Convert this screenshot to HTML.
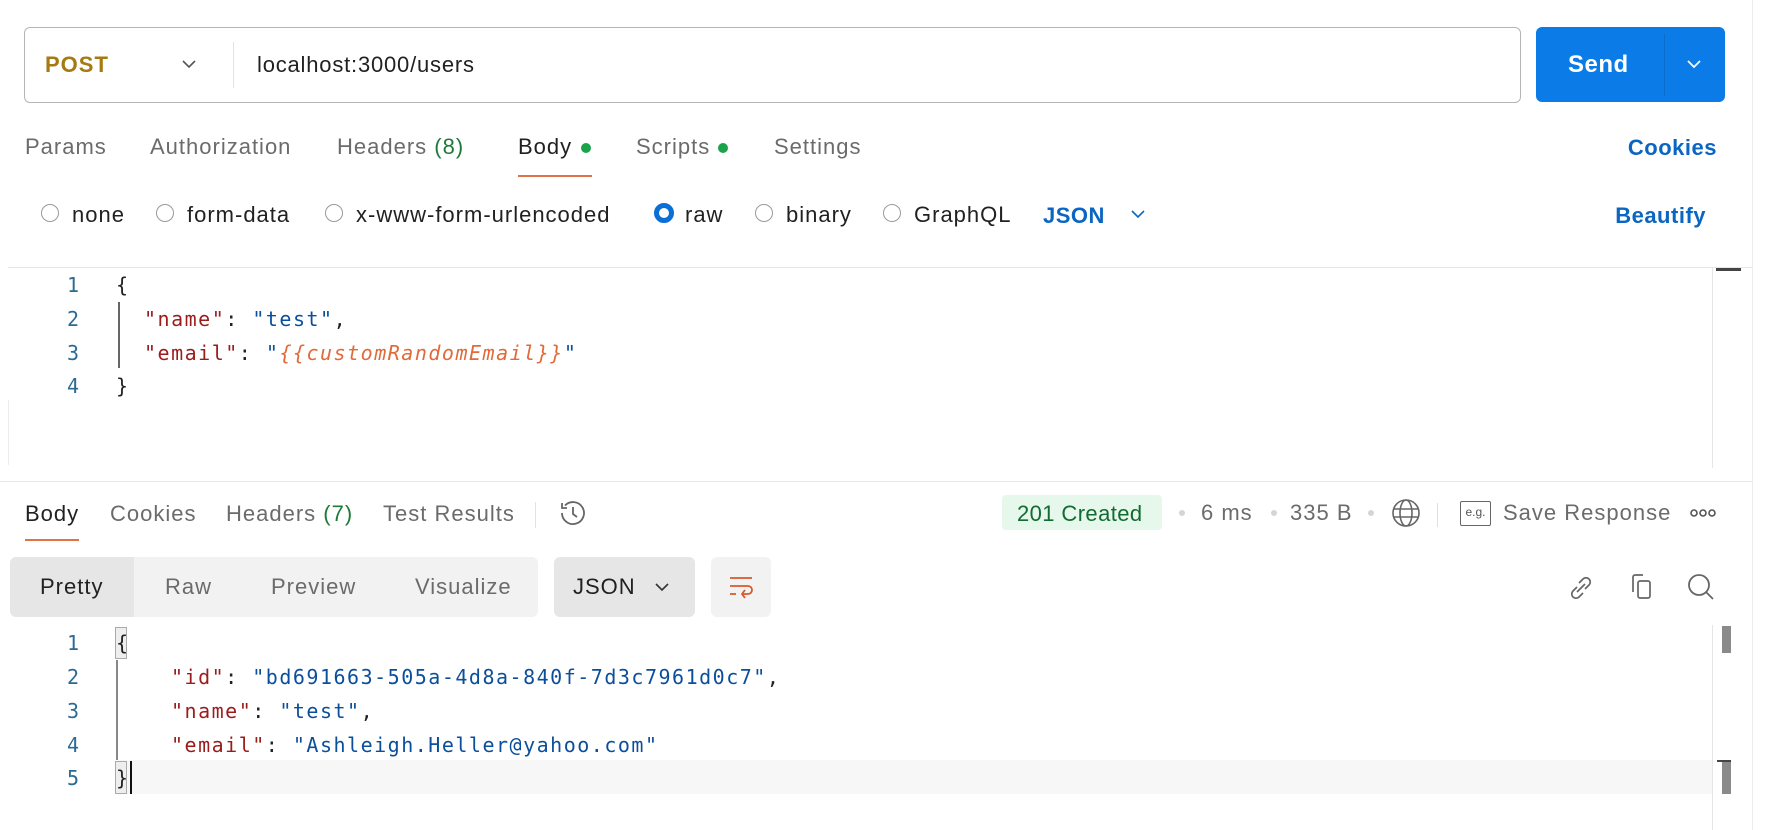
<!DOCTYPE html>
<html><head><meta charset="utf-8"><style>
*{margin:0;padding:0;box-sizing:border-box}
body{width:1766px;height:830px;background:#fff;position:relative;overflow:hidden;font-family:"Liberation Sans",sans-serif;color:#212121}
.a{position:absolute;white-space:nowrap}
.t{font-size:22px;color:#6b6b6b;line-height:24px;letter-spacing:1px}
.mono{font-family:"DejaVu Sans Mono","Liberation Mono",monospace;font-size:20px;line-height:34px;letter-spacing:1.5px}
.ln{color:#2b6a94;width:30px;text-align:right;letter-spacing:0}
.k{color:#9c1c1c}.s{color:#0b4f9c}.v{color:#e06a3a;font-style:italic}
.radio{width:18px;height:18px;border:1.5px solid #9a9a9a;border-radius:50%}
svg{position:absolute}
</style></head><body>
<!-- URL bar -->
<div class="a" style="left:24px;top:27px;width:1497px;height:76px;border:1.5px solid #b5b5b5;border-radius:6px"></div>
<div class="a" style="left:45px;top:52px;font-size:22px;font-weight:bold;color:#a57b11;letter-spacing:1px">POST</div>
<svg style="left:181px;top:59px" width="16" height="10"><path d="M2 2l6 6 6-6" fill="none" stroke="#555" stroke-width="1.6"/></svg>
<div class="a" style="left:233px;top:42px;width:1px;height:46px;background:#e3e3e3"></div>
<div class="a" style="left:257px;top:52px;font-size:22px;color:#212121;letter-spacing:0.8px">localhost:3000/users</div>
<div class="a" style="left:1536px;top:27px;width:189px;height:75px;background:#0b7be8;border-radius:6px"></div>
<div class="a" style="left:1664px;top:34px;width:1px;height:62px;background:#0a6ccc"></div>
<div class="a" style="left:1568px;top:51px;font-size:24px;font-weight:bold;color:#fff;letter-spacing:0.5px">Send</div>
<svg style="left:1686px;top:59px" width="16" height="10"><path d="M2 2l6 6 6-6" fill="none" stroke="#fff" stroke-width="1.8"/></svg>
<!-- tabs -->
<div class="a t" style="left:25px;top:135px">Params</div>
<div class="a t" style="left:150px;top:135px">Authorization</div>
<div class="a t" style="left:337px;top:135px">Headers <span style="color:#1f7a3a">(8)</span></div>
<div class="a t" style="left:518px;top:135px;color:#212121">Body</div>
<div class="a" style="left:581px;top:143px;width:10px;height:10px;border-radius:50%;background:#1aa34a"></div>
<div class="a" style="left:518px;top:175px;width:74px;height:2px;background:#e0734a"></div>
<div class="a t" style="left:636px;top:135px">Scripts</div>
<div class="a" style="left:718px;top:143px;width:10px;height:10px;border-radius:50%;background:#1aa34a"></div>
<div class="a t" style="left:774px;top:135px">Settings</div>
<div class="a" style="right:49px;top:135px;font-size:22px;font-weight:bold;color:#0b66c2;letter-spacing:0.5px">Cookies</div>
<!-- radios -->
<div class="a radio" style="left:41px;top:204px"></div><div class="a t" style="left:72px;top:203px;color:#212121">none</div>
<div class="a radio" style="left:156px;top:204px"></div><div class="a t" style="left:187px;top:203px;color:#212121">form-data</div>
<div class="a radio" style="left:325px;top:204px"></div><div class="a t" style="left:356px;top:203px;color:#212121">x-www-form-urlencoded</div>
<div class="a" style="left:654px;top:203px;width:20px;height:20px;border:5px solid #0b6fd6;border-radius:50%"></div><div class="a t" style="left:685px;top:203px;color:#212121">raw</div>
<div class="a radio" style="left:755px;top:204px"></div><div class="a t" style="left:786px;top:203px;color:#212121">binary</div>
<div class="a radio" style="left:883px;top:204px"></div><div class="a t" style="left:914px;top:203px;color:#212121">GraphQL</div>
<div class="a" style="left:1043px;top:203px;font-size:22px;font-weight:bold;color:#0b66c2;letter-spacing:0.5px">JSON</div>
<svg style="left:1130px;top:209px" width="16" height="10"><path d="M2 2l6 6 6-6" fill="none" stroke="#0b66c2" stroke-width="1.6"/></svg>
<div class="a" style="right:60px;top:203px;font-size:22px;font-weight:bold;color:#0b66c2;letter-spacing:0.5px">Beautify</div>
<!-- request editor -->
<div class="a" style="left:8px;top:267px;width:1745px;height:1px;background:#e6e6e6"></div>
<div class="a" style="left:1712px;top:268px;width:1px;height:200px;background:#e6e6e6"></div>
<div class="a" style="left:1716px;top:268px;width:25px;height:3px;background:#444"></div>
<div class="a" style="left:1752px;top:0;width:1px;height:830px;background:#ececec"></div>
<div class="a" style="left:8px;top:400px;width:1px;height:65px;background:#ececec"></div>
<div class="a mono ln" style="left:49px;top:268px">1</div>
<div class="a mono ln" style="left:49px;top:302px">2</div>
<div class="a mono ln" style="left:49px;top:336px">3</div>
<div class="a mono ln" style="left:49px;top:369px">4</div>
<div class="a" style="left:118px;top:302px;width:1.5px;height:66px;background:#666"></div>
<div class="a mono" style="left:116px;top:268px">{</div>
<div class="a mono" style="left:144px;top:302px"><span class="k">"name"</span>: <span class="s">"test"</span>,</div>
<div class="a mono" style="left:144px;top:336px"><span class="k">"email"</span>: <span class="s">"</span><span class="v">{{customRandomEmail}}</span><span class="s">"</span></div>
<div class="a mono" style="left:116px;top:369px">}</div>
<div class="a" style="left:0;top:481px;width:1752px;height:1px;background:#e6e6e6"></div>
<!-- response tabs -->
<div class="a t" style="left:25px;top:502px;color:#212121">Body</div>
<div class="a" style="left:25px;top:539px;width:54px;height:2px;background:#e0734a"></div>
<div class="a t" style="left:110px;top:502px">Cookies</div>
<div class="a t" style="left:226px;top:502px">Headers <span style="color:#1f7a3a">(7)</span></div>
<div class="a t" style="left:383px;top:502px">Test Results</div>
<div class="a" style="left:535px;top:502px;width:1px;height:26px;background:#e3e3e3"></div>
<svg style="left:557px;top:499px" width="32" height="28" viewBox="0 0 32 28"><path d="M5 14a11 11 0 1 0 3-7.5" fill="none" stroke="#666" stroke-width="1.8"/><path d="M5 4v5h5" fill="none" stroke="#666" stroke-width="1.8"/><path d="M16 8v7l4 3" fill="none" stroke="#666" stroke-width="1.8"/></svg>
<div class="a" style="left:1002px;top:495px;width:160px;height:35px;background:#e6f8ec;border-radius:4px"></div>
<div class="a" style="left:1017px;top:501px;font-size:22px;color:#146b32;letter-spacing:0.4px">201 Created</div>
<div class="a" style="left:1179px;top:510px;width:6px;height:6px;border-radius:50%;background:#d5d5d5"></div>
<div class="a t" style="left:1201px;top:501px">6 ms</div>
<div class="a" style="left:1271px;top:510px;width:6px;height:6px;border-radius:50%;background:#d5d5d5"></div>
<div class="a t" style="left:1290px;top:501px">335 B</div>
<div class="a" style="left:1368px;top:510px;width:6px;height:6px;border-radius:50%;background:#d5d5d5"></div>
<svg style="left:1391px;top:498px" width="30" height="30" viewBox="0 0 30 30"><g fill="none" stroke="#666" stroke-width="1.6"><circle cx="15" cy="15" r="13"/><ellipse cx="15" cy="15" rx="6" ry="13"/><path d="M2.5 11h25M2.5 19h25"/></g></svg>
<div class="a" style="left:1437px;top:503px;width:1px;height:24px;background:#e0e0e0"></div>
<div class="a" style="left:1460px;top:501px;width:31px;height:25px;border:1.5px solid #666;border-radius:2px;font-size:12px;color:#555;text-align:center;line-height:21px">e.g.</div>
<div class="a t" style="left:1503px;top:501px">Save Response</div>
<svg style="left:1689px;top:508px" width="28" height="10"><g fill="none" stroke="#555" stroke-width="1.6"><circle cx="5" cy="5" r="3"/><circle cx="14" cy="5" r="3"/><circle cx="23" cy="5" r="3"/></g></svg>
<!-- toolbar -->
<div class="a" style="left:10px;top:557px;width:528px;height:60px;background:#f2f2f2;border-radius:6px"></div>
<div class="a" style="left:10px;top:557px;width:124px;height:60px;background:#e6e6e6;border-radius:6px 0 0 6px"></div>
<div class="a t" style="left:40px;top:575px;color:#212121">Pretty</div>
<div class="a t" style="left:165px;top:575px">Raw</div>
<div class="a t" style="left:271px;top:575px">Preview</div>
<div class="a t" style="left:415px;top:575px">Visualize</div>
<div class="a" style="left:554px;top:557px;width:141px;height:60px;background:#e6e6e6;border-radius:6px"></div>
<div class="a t" style="left:573px;top:575px;color:#212121">JSON</div>
<svg style="left:654px;top:582px" width="16" height="10"><path d="M2 2l6 6 6-6" fill="none" stroke="#333" stroke-width="1.6"/></svg>
<div class="a" style="left:711px;top:557px;width:60px;height:60px;background:#f2f2f2;border-radius:6px"></div>
<svg style="left:727px;top:574px" width="28" height="28" viewBox="0 0 28 28"><g fill="none" stroke="#d9592b" stroke-width="1.8"><path d="M3 4h22M3 12h18a4 4 0 0 1 0 8h-6M3 20h6"/><path d="M18 16l-3 4 3 4"/></g></svg>
<svg style="left:1567px;top:574px" width="28" height="28" viewBox="0 0 28 28"><g fill="none" stroke="#666" stroke-width="1.7"><path d="M12 9l4-4a4 4 0 0 1 6 6l-4 4M16 19l-4 4a4 4 0 0 1-6-6l4-4M10 18l8-8"/></g></svg>
<svg style="left:1627px;top:572px" width="28" height="30" viewBox="0 0 28 30"><g fill="none" stroke="#666" stroke-width="1.7"><path d="M6 20V5a2 2 0 0 1 2-2h8"/><rect x="11" y="9" width="12" height="17" rx="2"/></g></svg>
<svg style="left:1686px;top:572px" width="30" height="30" viewBox="0 0 30 30"><g fill="none" stroke="#666" stroke-width="1.8"><circle cx="13" cy="13" r="10"/><path d="M20 20l7 7"/></g></svg>
<!-- response editor -->
<div class="a" style="left:1712px;top:625px;width:1px;height:205px;background:#e6e6e6"></div>
<div class="a" style="left:1722px;top:626px;width:9px;height:27px;background:#8a8a8a"></div>
<div class="a" style="left:118px;top:760px;width:1594px;height:34px;background:#f7f7f7"></div>
<div class="a" style="left:1722px;top:761px;width:9px;height:33px;background:#8a8a8a"></div>
<div class="a" style="left:1717px;top:760px;width:14px;height:2px;background:#444"></div>
<div class="a mono ln" style="left:49px;top:626px">1</div>
<div class="a mono ln" style="left:49px;top:660px">2</div>
<div class="a mono ln" style="left:49px;top:694px">3</div>
<div class="a mono ln" style="left:49px;top:728px">4</div>
<div class="a mono ln" style="left:49px;top:761px">5</div>
<div class="a" style="left:115px;top:627px;width:12px;height:32px;border:1px solid #aaa;background:#eee"></div>
<div class="a" style="left:115px;top:761px;width:12px;height:33px;border:1px solid #aaa;background:#eee"></div>
<div class="a" style="left:130px;top:761px;width:2px;height:33px;background:#111"></div>
<div class="a" style="left:116px;top:660px;width:1.5px;height:100px;background:#888"></div>
<div class="a mono" style="left:116px;top:626px">{</div>
<div class="a mono" style="left:171px;top:660px"><span class="k">"id"</span>: <span class="s">"bd691663-505a-4d8a-840f-7d3c7961d0c7"</span>,</div>
<div class="a mono" style="left:171px;top:694px"><span class="k">"name"</span>: <span class="s">"test"</span>,</div>
<div class="a mono" style="left:171px;top:728px"><span class="k">"email"</span>: <span class="s">"Ashleigh.Heller@yahoo.com"</span></div>
<div class="a mono" style="left:116px;top:761px">}</div>
</body></html>
